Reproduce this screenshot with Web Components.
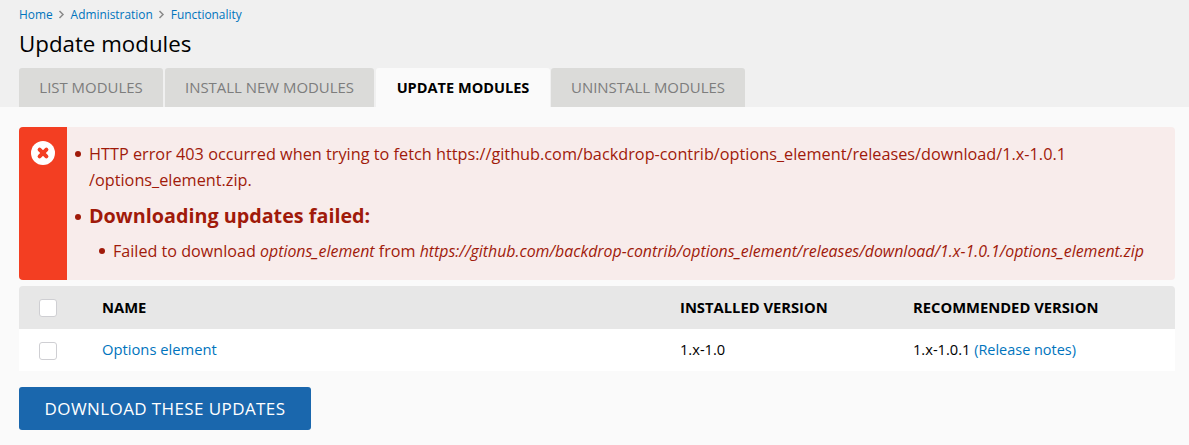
<!DOCTYPE html>
<html>
<head>
<meta charset="utf-8">
<style>
  html, body { margin: 0; height: 100%; }
  body {
    background: #fafafa;
    color: #000;
    font: 14.65px/21px "Open Sans", sans-serif;
    overflow: hidden;
  }
</style>
</head>
<body>
<page-header></page-header>
<main-content></main-content>

<script>
class PageHeader extends HTMLElement {
  constructor() {
    super();
    this.attachShadow({ mode: "open" });
    this.shadowRoot.innerHTML = `
      <style>
        :host {
          display: block;
          background: #f0f0f0;
          padding: 4px 19px 0;
        }
        nav {
          display: flex;
          align-items: center;
          height: 21px;
          font-size: 11.9px;
        }
        nav a { color: #0074bd; text-decoration: none; }
        nav svg { margin: 0 5.5px; }
        h1 {
          margin: 6px 0 12px;
          font-size: 22.3px;
          line-height: 25px;
          font-weight: 400;
        }
        ul {
          display: flex;
          list-style: none;
          margin: 0;
          padding: 0;
          height: 39px;
        }
        li {
          display: flex;
          align-items: center;
          justify-content: center;
          background: #dbdbd9;
          color: #7d7d7d;
          font-size: 14.95px;
          margin-right: 2px;
          border-radius: 3px 3px 0 0;
        }
        li.active {
          background: #fafafa;
          color: #000;
          font-size: 14.55px;
          font-weight: 700;
          margin-right: 1px;
        }
      </style>
      <nav>
        <a>Home</a>
        <svg width="7" height="9" viewBox="0 0 7 9"><path d="M1.5 1l3.5 3.5L1.5 8" fill="none" stroke="#8a8a8a" stroke-width="1.5"/></svg>
        <a>Administration</a>
        <svg width="7" height="9" viewBox="0 0 7 9"><path d="M1.5 1l3.5 3.5L1.5 8" fill="none" stroke="#8a8a8a" stroke-width="1.5"/></svg>
        <a>Functionality</a>
      </nav>
      <h1>Update modules</h1>
      <ul>
        <li style="width:144px">LIST MODULES</li>
        <li style="width:209px">INSTALL NEW MODULES</li>
        <li class="active" style="width:174px">UPDATE MODULES</li>
        <li style="width:194px">UNINSTALL MODULES</li>
      </ul>
    `;
  }
}

class ErrorMessages extends HTMLElement {
  constructor() {
    super();
    this.attachShadow({ mode: "open" });
    this.shadowRoot.innerHTML = `
      <style>
        :host {
          display: flex;
          background: #f8eceb;
          color: #a01a0a;
          border-radius: 4px;
          overflow: hidden;
          height: 153px;
          font-size: 16.27px;
        }
        .strip {
          flex: 0 0 48px;
          background: #f33e22;
          display: flex;
          justify-content: center;
          padding-top: 14px;
          box-sizing: border-box;
        }
        .body { flex: 1; padding: 14px 0 0 22px; }
        ul { margin: 0; padding: 0; list-style: none; }
        li { position: relative; }
        li::before {
          content: "";
          position: absolute;
          left: -14px;
          top: 10px;
          width: 6px;
          height: 6px;
          border-radius: 50%;
          background: #a01a0a;
        }
        .url { line-height: 26px; }
        .head {
          margin-top: 10px;
          font-size: 19.76px;
          font-weight: 700;
          line-height: 26px;
        }
        .head::before { top: 11px; }
        ul ul {
          margin: 9px 0 0 24px;
          font-size: 16.15px;
          font-weight: 400;
        }
        ul ul li { line-height: 26px; white-space: nowrap; }
        em { font-size: 15.9px; }
      </style>
      <div class="strip">
        <svg width="24" height="24" viewBox="0 0 24 24">
          <circle cx="12" cy="12" r="12" fill="#fff"/>
          <path d="M8.6 8.6l6.8 6.8M15.4 8.6l-6.8 6.8" stroke="#f33e22" stroke-width="4" stroke-linecap="round"/>
        </svg>
      </div>
      <div class="body">
        <ul>
          <li class="url">HTTP error 403 occurred when trying to fetch https://github.com/backdrop-contrib/options_element/releases/download/1.x-1.0.1<br>/options_element.zip.</li>
          <li class="head">Downloading updates failed:
            <ul>
              <li>Failed to download <em>options_element</em> from <em>https://github.com/backdrop-contrib/options_element/releases/download/1.x-1.0.1/options_element.zip</em></li>
            </ul>
          </li>
        </ul>
      </div>
    `;
  }
}

class UpdateTable extends HTMLElement {
  constructor() {
    super();
    this.attachShadow({ mode: "open" });
    this.shadowRoot.innerHTML = `
      <style>
        :host { display: block; }
        .row {
          display: grid;
          grid-template-columns: 83px 578px 233px 1fr;
          align-items: center;
          background: #fff;
          height: 42px;
          box-sizing: border-box;
          padding-bottom: 1px;
        }
        .row.head {
          background: #e7e7e7;
          height: 43px;
          padding-bottom: 0;
          font-weight: 700;
          border-radius: 4px 4px 0 0;
          font-size: 14.75px;
        }
        .check {
          justify-self: start;
          margin-left: 20px;
          width: 16px;
          height: 16px;
          background: #fff;
          border: 1px solid #cfcfd3;
          border-radius: 3px;
        }
        .row:not(.head) .check { position: relative; top: 1px; }
        a { color: #0074bd; text-decoration: none; }
        .name { font-size: 14.75px; }
        .notes { font-size: 14.45px; }
      </style>
      <div class="row head">
        <span class="check"></span>
        <span>NAME</span>
        <span>INSTALLED VERSION</span>
        <span>RECOMMENDED VERSION</span>
      </div>
      <div class="row">
        <span class="check"></span>
        <a class="name">Options element</a>
        <span>1.x-1.0</span>
        <span>1.x-1.0.1 <a class="notes">(Release notes)</a></span>
      </div>
    `;
  }
}

class ActionButton extends HTMLElement {
  constructor() {
    super();
    this.attachShadow({ mode: "open" });
    this.shadowRoot.innerHTML = `
      <style>
        :host {
          display: inline-flex;
          align-items: center;
          justify-content: center;
          width: 292px;
          height: 43px;
          background: #1a67ad;
          color: #fff;
          border-radius: 3px;
          font-size: 17px;
          letter-spacing: 0.4px;
        }
      </style>
      <slot></slot>
    `;
  }
}

class MainContent extends HTMLElement {
  constructor() {
    super();
    this.attachShadow({ mode: "open" });
    this.shadowRoot.innerHTML = `
      <style>
        :host {
          display: flex;
          flex-direction: column;
          padding: 20px 14px 0 19px;
        }
        update-table { margin-top: 6px; }
        action-button { margin-top: 16px; align-self: flex-start; }
      </style>
      <error-messages></error-messages>
      <update-table></update-table>
      <action-button>DOWNLOAD THESE UPDATES</action-button>
    `;
  }
}

customElements.define("page-header", PageHeader);
customElements.define("error-messages", ErrorMessages);
customElements.define("update-table", UpdateTable);
customElements.define("action-button", ActionButton);
customElements.define("main-content", MainContent);
</script>
</body>
</html>
